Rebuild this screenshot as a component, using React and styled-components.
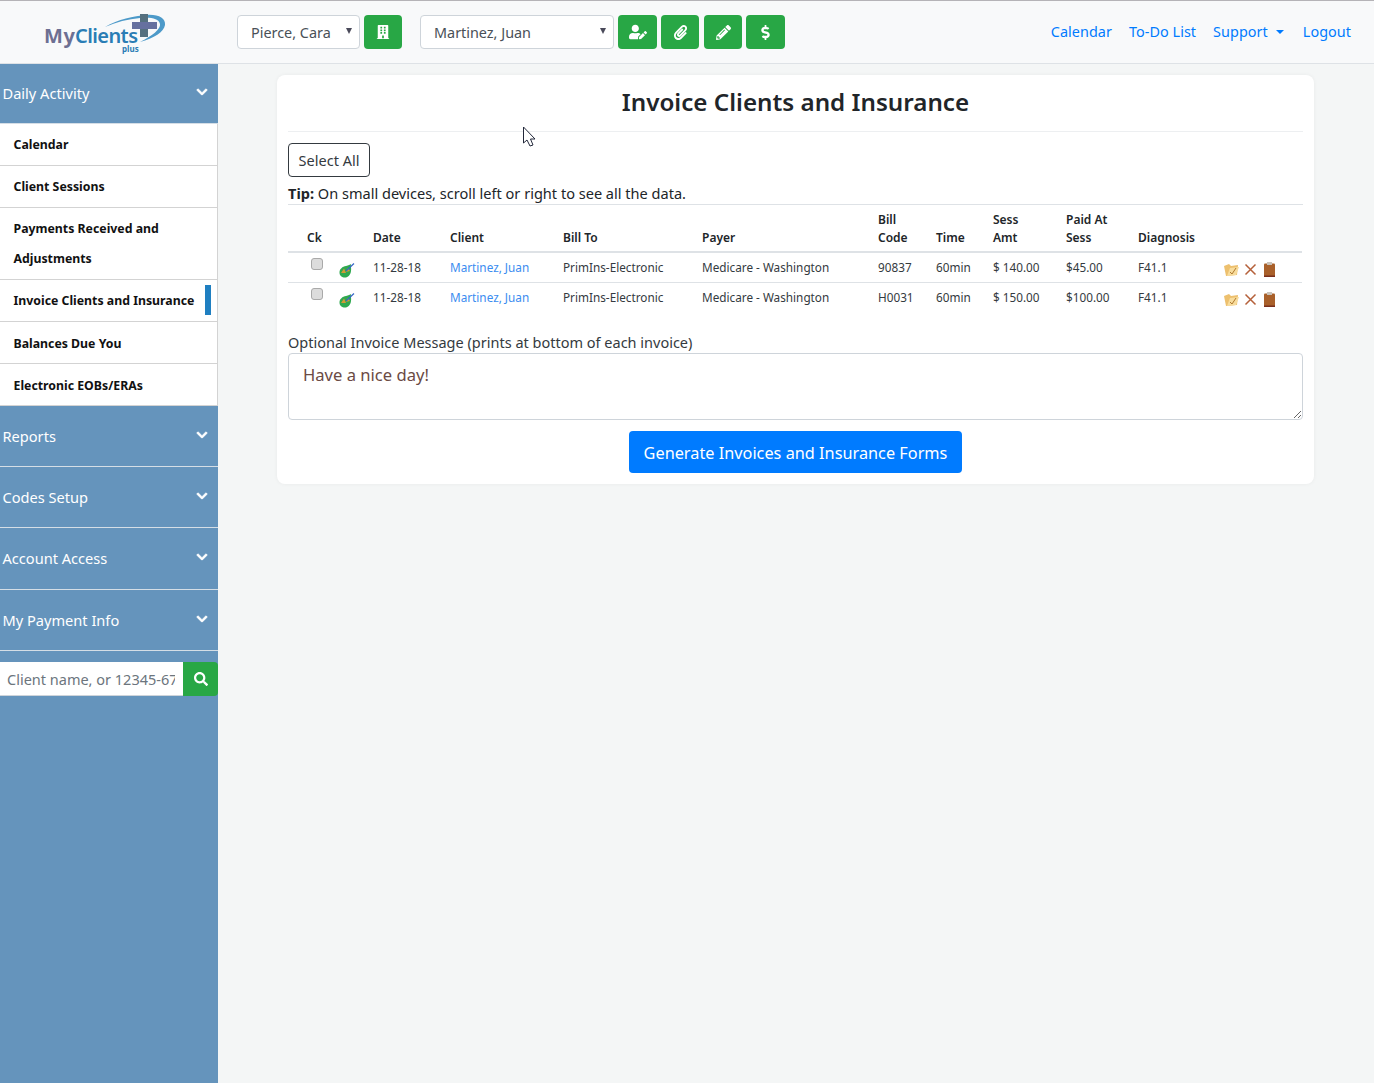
import styled, { createGlobalStyle } from 'styled-components';
import {
    FaBuilding, FaUserEdit, FaPaperclip, FaPencilAlt, FaDollarSign, FaChevronDown, FaSearch,
} from 'react-icons/fa';

const GlobalStyle = createGlobalStyle`
    html, body { margin: 0; padding: 0; }
    body {
        background: #f4f6f6;
        font-family: "Noto Sans", "Open Sans", "Liberation Sans", sans-serif;
        color: #212529;
    }
    * { box-sizing: border-box; }
`;

const Page = styled.div`
    position: relative;
    width: 1374px;
    height: 1083px;
    overflow: hidden;
    display: flex;
    flex-direction: column;
`;

const TopBar = styled.header`
    height: 64px;
    flex: none;
    display: flex;
    align-items: center;
    background: #f8f9fa;
    border-top: 1px solid #b5b3b7;
    border-bottom: 1px solid #dee2e6;
    padding: 0 23px 0 0;
`;

const LogoBox = styled.div`
    width: 237px;
    flex: none;
    padding-left: 42px;
    display: flex;
`;

const SelectWrap = styled.div`
    position: relative;
    width: ${props => props.$width}px;
    height: 34px;
    margin-right: 4px;
    &::after {
        content: "";
        position: absolute;
        right: 8px;
        top: 13px;
        border-left: 3.5px solid transparent;
        border-right: 3.5px solid transparent;
        border-top: 6px solid #4a4a5a;
    }
`;

const Select = styled.select`
    appearance: none;
    width: 100%;
    height: 100%;
    padding: 0 0 0 13px;
    font: 14.4px "Noto Sans", sans-serif;
    color: #495057;
    background: #fff;
    border: 1px solid #ced4da;
    border-radius: 4px;
`;

const GreenButton = styled.button`
    width: ${props => props.$width || 38}px;
    height: 34px;
    margin-right: ${props => props.$gap ?? 4}px;
    display: flex;
    align-items: center;
    justify-content: center;
    padding: 0;
    color: #fff;
    background: #28a745;
    border: 0;
    border-radius: 4px;
    font-size: 16px;
`;

const TopLinks = styled.nav`
    margin-left: auto;
    padding-bottom: 2px;
    display: flex;
    align-items: center;
    gap: 17px;
`;

const TopLink = styled.a`
    font-size: 14.4px;
    color: #007bff;
    text-decoration: none;
    letter-spacing: 0.05px;
`;

const Caret = styled.span`
    display: inline-block;
    margin: 0 2px 0 8px;
    vertical-align: 3px;
    border-left: 4.5px solid transparent;
    border-right: 4.5px solid transparent;
    border-top: 4.5px solid #007bff;
`;

const Body = styled.div`
    flex: 1;
    display: flex;
    min-height: 0;
`;

const Sidebar = styled.aside`
    width: 218px;
    flex: none;
    background: #6594bc;
`;

const SideHead = styled.div`
    height: ${props => props.$height || 61}px;
    display: flex;
    align-items: center;
    justify-content: space-between;
    padding: 0 10px 1px 2.5px;
    color: #fff;
    font-size: 14.6px;
    border-bottom: 1px solid #d5dee6;
    svg { font-size: 12px; margin-bottom: 2px; stroke: #fff; stroke-width: 30px; }
`;

const SubMenu = styled.div`
    background: #fff;
    border-right: 1px solid #d3d3d3;
`;

const SubItem = styled.div`
    position: relative;
    display: flex;
    align-items: center;
    min-height: ${props => props.$height || 42}px;
    padding: ${props => props.$nudge ? '2px' : '0'} 20px 0 13.5px;
    font-size: 12.3px;
    line-height: 30px;
    font-weight: 700;
    color: #111;
    border-bottom: 1px solid #d3d3d3;
`;

const ActiveMark = styled.span`
    position: absolute;
    right: 6px;
    top: 5px;
    width: 6px;
    height: 30px;
    background: #1f7fc1;
`;

const SearchRow = styled.div`
    display: flex;
    height: 34px;
    margin-top: 11px;
`;

const SearchInput = styled.input`
    width: 183px;
    height: 100%;
    padding: 1px 8px 0 7px;
    font: 14.5px "Noto Sans", sans-serif;
    color: #495057;
    background: #fff;
    border: 0;
    border-bottom: 1px solid #ced4da;
    border-radius: 0;
    &::placeholder { color: #6c757d; opacity: 1; }
`;

const SearchButton = styled.button`
    flex: 1;
    display: flex;
    align-items: center;
    justify-content: center;
    padding: 0;
    color: #fff;
    background: #28a745;
    border: 0;
    border-radius: 0 4px 4px 0;
    font-size: 14px;
`;

const Main = styled.main`
    flex: 1;
    padding: 11px 60px 0 59px;
`;

const Card = styled.section`
    height: 409px;
    padding: 0 11px;
    background: #fff;
    border-radius: 8px;
    box-shadow: 0 0 4px rgba(0, 0, 0, 0.05);
`;

const Title = styled.h1`
    margin: 0;
    height: 57px;
    padding-top: 9px;
    text-align: center;
    font-size: 24.2px;
    line-height: 36px;
    font-weight: 600;
    color: #212529;
    border-bottom: 1px solid #edeff1;
`;

const OutlineButton = styled.button`
    display: block;
    width: 82px;
    height: 34px;
    margin-top: 11px;
    padding: 0;
    font: 14.5px "Noto Sans", sans-serif;
    color: #343a40;
    background: #fff;
    border: 1px solid #343a40;
    border-radius: 4px;
`;

const Tip = styled.p`
    margin: 0;
    height: 28px;
    padding-top: 6px;
    font-size: 14.55px;
    line-height: 20px;
    border-bottom: 1px solid #dee2e6;
    b { font-weight: 700; }
`;

const Table = styled.table`
    width: 1014px;
    table-layout: fixed;
    border-collapse: collapse;
    font-size: 11.75px;
`;

const Th = styled.th`
    height: 47px;
    padding: 0 0 4px ${props => props.$pad || 0}px;
    vertical-align: bottom;
    text-align: left;
    font-size: 12px;
    line-height: 18px;
    font-weight: 600;
    color: #212529;
    border-bottom: 2px solid #dee2e6;
`;

const Td = styled.td`
    height: 30px;
    padding: 0 0 0 ${props => props.$pad || 0}px;
    white-space: nowrap;
    color: #343a40;
    border-bottom: ${props => props.$last ? 'none' : '1px solid #dee2e6'};
    vertical-align: middle;
`;

const ClientLink = styled.a`
    color: #3b8cf0;
    text-decoration: none;
`;

const CheckBox = styled.input`
    appearance: none;
    display: block;
    width: 12px;
    height: 12px;
    margin: -6px 0 0 0;
    background: #dcdcdc;
    border: 1px solid #a9a9a9;
    border-radius: 3px;
`;

const IconRow = styled.div`
    display: flex;
    align-items: center;
    gap: 4px;
    margin-top: 5px;
`;

const MessageLabel = styled.label`
    display: block;
    margin-top: 20px;
    font-size: 14.5px;
    line-height: 20px;
    color: #343a40;
`;

const Message = styled.textarea`
    display: block;
    width: 1015px;
    height: 67px;
    margin-top: 1px;
    padding: 9px 14px;
    font: 16.6px "Noto Sans", sans-serif;
    color: #6b4a44;
    background: #fff;
    border: 1px solid #ced4da;
    border-radius: 4px;
`;

const SubmitRow = styled.div`
    display: flex;
    justify-content: center;
    margin-top: 11px;
`;

const SubmitButton = styled.button`
    width: 333px;
    height: 42px;
    padding: 1px 0 0;
    font: 16.3px "Noto Sans", sans-serif;
    color: #fff;
    background: #007bff;
    border: 0;
    border-radius: 4px;
`;

const Cursor = styled.svg`
    position: absolute;
    left: 522px;
    top: 126px;
`;

const rows = [
    { code: '90837', amt: '$ 140.00', paid: '$45.00' },
    { code: 'H0031', amt: '$ 150.00', paid: '$100.00' },
];

const columnWidths = [45, 40, 77, 113, 139, 176, 58, 57, 73, 72, 85, 79];

function Logo() {
    return (
        <svg width="124" height="44" viewBox="0 0 124 44">
            <path d="M63 17 C76 9 92 6 104 5 C116 4 124 8 123 15 C122 22 112 28 98 32 C110 26 119 19 118 14 C117 8 108 7 98 8 C86 9 74 12 63 17 Z" fill="#4d9ac9" />
            <text x="2" y="33" fontFamily="Noto Sans, sans-serif" fontSize="20" fontWeight="700" fill="#6d6f92" textLength="31">My</text>
            <text x="33" y="33" fontFamily="Noto Sans, sans-serif" fontSize="20" fontWeight="600" fill="#2a7db5" textLength="63">Clients</text>
            <rect x="98" y="4" width="8" height="23" fill="#55707f" />
            <rect x="90" y="12" width="25" height="7" fill="#66709f" />
            <text x="80" y="42" fontFamily="Noto Sans, sans-serif" fontSize="8" fontWeight="700" fill="#2a7db5">plus</text>
        </svg>
    );
}

function PaintIcon() {
    return (
        <svg width="16" height="16" viewBox="0 0 16 16">
            <path d="M0.5 10.5 C0.5 7 3.5 4.5 7 4 C9.5 3.5 11 2.5 12 2 C11.5 4 12.5 6 12 9 C11.5 13 9 15.5 6 15.5 C3 15.5 0.5 14 0.5 10.5 Z" fill="#2fa84f" />
            <path d="M2 11 L5 6.5 L7 11 Z" fill="#d39a35" />
            <path d="M7 10 L9 6 L11 9 Z" fill="#d39a35" />
            <path d="M7 9 L15 1.5" stroke="#3465c8" strokeWidth="1.2" />
        </svg>
    );
}

function FolderIcon() {
    return (
        <svg width="17" height="14" viewBox="0 0 17 14">
            <path d="M1 3 L6 1 L8 3 L15 2 L14 12 L3 13 Z" fill="#edc06e" />
            <path d="M4 13 L7 5 L16 4 L13 12 Z" fill="#f8dc9c" />
            <path d="M7 9 L9 11 L13 5" stroke="#b07a30" strokeWidth="1" fill="none" />
        </svg>
    );
}

function CrossIcon() {
    return (
        <svg width="13" height="13" viewBox="0 0 13 13">
            <path d="M1.5 1.5 L11.5 11.5 M11.5 1.5 L1.5 11.5" stroke="#b5603a" strokeWidth="1.5" />
        </svg>
    );
}

function ClipboardIcon() {
    return (
        <svg width="15" height="15" viewBox="0 0 15 15">
            <rect x="3" y="1.5" width="11" height="13.5" rx="1" fill="#a9602a" />
            <rect x="3" y="13.5" width="11" height="1.5" fill="#7a2f1c" />
            <rect x="6" y="0" width="5" height="3" fill="#c9c3bb" />
        </svg>
    );
}

export default function App() {
    return (
        <Page>
            <GlobalStyle />
            <TopBar>
                <LogoBox><Logo /></LogoBox>
                <SelectWrap $width={123}>
                    <Select defaultValue="Pierce, Cara"><option>Pierce, Cara</option></Select>
                </SelectWrap>
                <GreenButton $gap={18}><FaBuilding size={14} /></GreenButton>
                <SelectWrap $width={194}>
                    <Select defaultValue="Martinez, Juan"><option>Martinez, Juan</option></Select>
                </SelectWrap>
                <GreenButton $width={39}><FaUserEdit size={18} /></GreenButton>
                <GreenButton $gap={5}><FaPaperclip size={15} /></GreenButton>
                <GreenButton><FaPencilAlt size={15} /></GreenButton>
                <GreenButton $width={39}><FaDollarSign size={15} /></GreenButton>
                <TopLinks>
                    <TopLink>Calendar</TopLink>
                    <TopLink>To-Do List</TopLink>
                    <TopLink>Support<Caret /></TopLink>
                    <TopLink>Logout</TopLink>
                </TopLinks>
            </TopBar>
            <Body>
                <Sidebar>
                    <SideHead $height={60}>Daily Activity<FaChevronDown /></SideHead>
                    <SubMenu>
                        <SubItem>Calendar</SubItem>
                        <SubItem>Client Sessions</SubItem>
                        <SubItem $height={72}>Payments Received and Adjustments</SubItem>
                        <SubItem>Invoice Clients and Insurance<ActiveMark /></SubItem>
                        <SubItem $nudge>Balances Due You</SubItem>
                        <SubItem $nudge>Electronic EOBs/ERAs</SubItem>
                    </SubMenu>
                    <SideHead>Reports<FaChevronDown /></SideHead>
                    <SideHead>Codes Setup<FaChevronDown /></SideHead>
                    <SideHead $height={62}>Account Access<FaChevronDown /></SideHead>
                    <SideHead>My Payment Info<FaChevronDown /></SideHead>
                    <SearchRow>
                        <SearchInput placeholder="Client name, or 12345-6789" />
                        <SearchButton><FaSearch /></SearchButton>
                    </SearchRow>
                </Sidebar>
                <Main>
                    <Card>
                        <Title>Invoice Clients and Insurance</Title>
                        <OutlineButton>Select All</OutlineButton>
                        <Tip><b>Tip:</b> On small devices, scroll left or right to see all the data.</Tip>
                        <Table>
                            <colgroup>
                                {columnWidths.map((w, i) => <col key={i} width={w} />)}
                            </colgroup>
                            <thead>
                                <tr>
                                    <Th $pad={19}>Ck</Th>
                                    <Th />
                                    <Th>Date</Th>
                                    <Th>Client</Th>
                                    <Th>Bill To</Th>
                                    <Th>Payer</Th>
                                    <Th>Bill<br />Code</Th>
                                    <Th>Time</Th>
                                    <Th>Sess<br />Amt</Th>
                                    <Th>Paid At<br />Sess</Th>
                                    <Th>Diagnosis</Th>
                                    <Th />
                                </tr>
                            </thead>
                            <tbody>
                                {rows.map((row, i) => {
                                    const last = i === rows.length - 1;
                                    return (
                                        <tr key={row.code}>
                                            <Td $last={last} $pad={23}><CheckBox type="checkbox" /></Td>
                                            <Td $last={last} $pad={6}><IconRow><PaintIcon /></IconRow></Td>
                                            <Td $last={last}>11-28-18</Td>
                                            <Td $last={last}><ClientLink>Martinez, Juan</ClientLink></Td>
                                            <Td $last={last}>PrimIns-Electronic</Td>
                                            <Td $last={last}>Medicare - Washington</Td>
                                            <Td $last={last}>{row.code}</Td>
                                            <Td $last={last}>60min</Td>
                                            <Td $last={last}>{row.amt}</Td>
                                            <Td $last={last}>{row.paid}</Td>
                                            <Td $last={last}>F41.1</Td>
                                            <Td $last={last}>
                                                <IconRow>
                                                    <FolderIcon />
                                                    <CrossIcon />
                                                    <ClipboardIcon />
                                                </IconRow>
                                            </Td>
                                        </tr>
                                    );
                                })}
                            </tbody>
                        </Table>
                        <MessageLabel>Optional Invoice Message (prints at bottom of each invoice)</MessageLabel>
                        <Message defaultValue="Have a nice day!" />
                        <SubmitRow>
                            <SubmitButton>Generate Invoices and Insurance Forms</SubmitButton>
                        </SubmitRow>
                    </Card>
                </Main>
            </Body>
            <Cursor width="16" height="22" viewBox="0 0 16 22">
                <path d="M1.5 1 L1.5 17 L5 14 L8 20 L11 19 L8.5 13 L13 13 Z" fill="#fff" stroke="#22283a" strokeWidth="1" />
            </Cursor>
        </Page>
    );
}
